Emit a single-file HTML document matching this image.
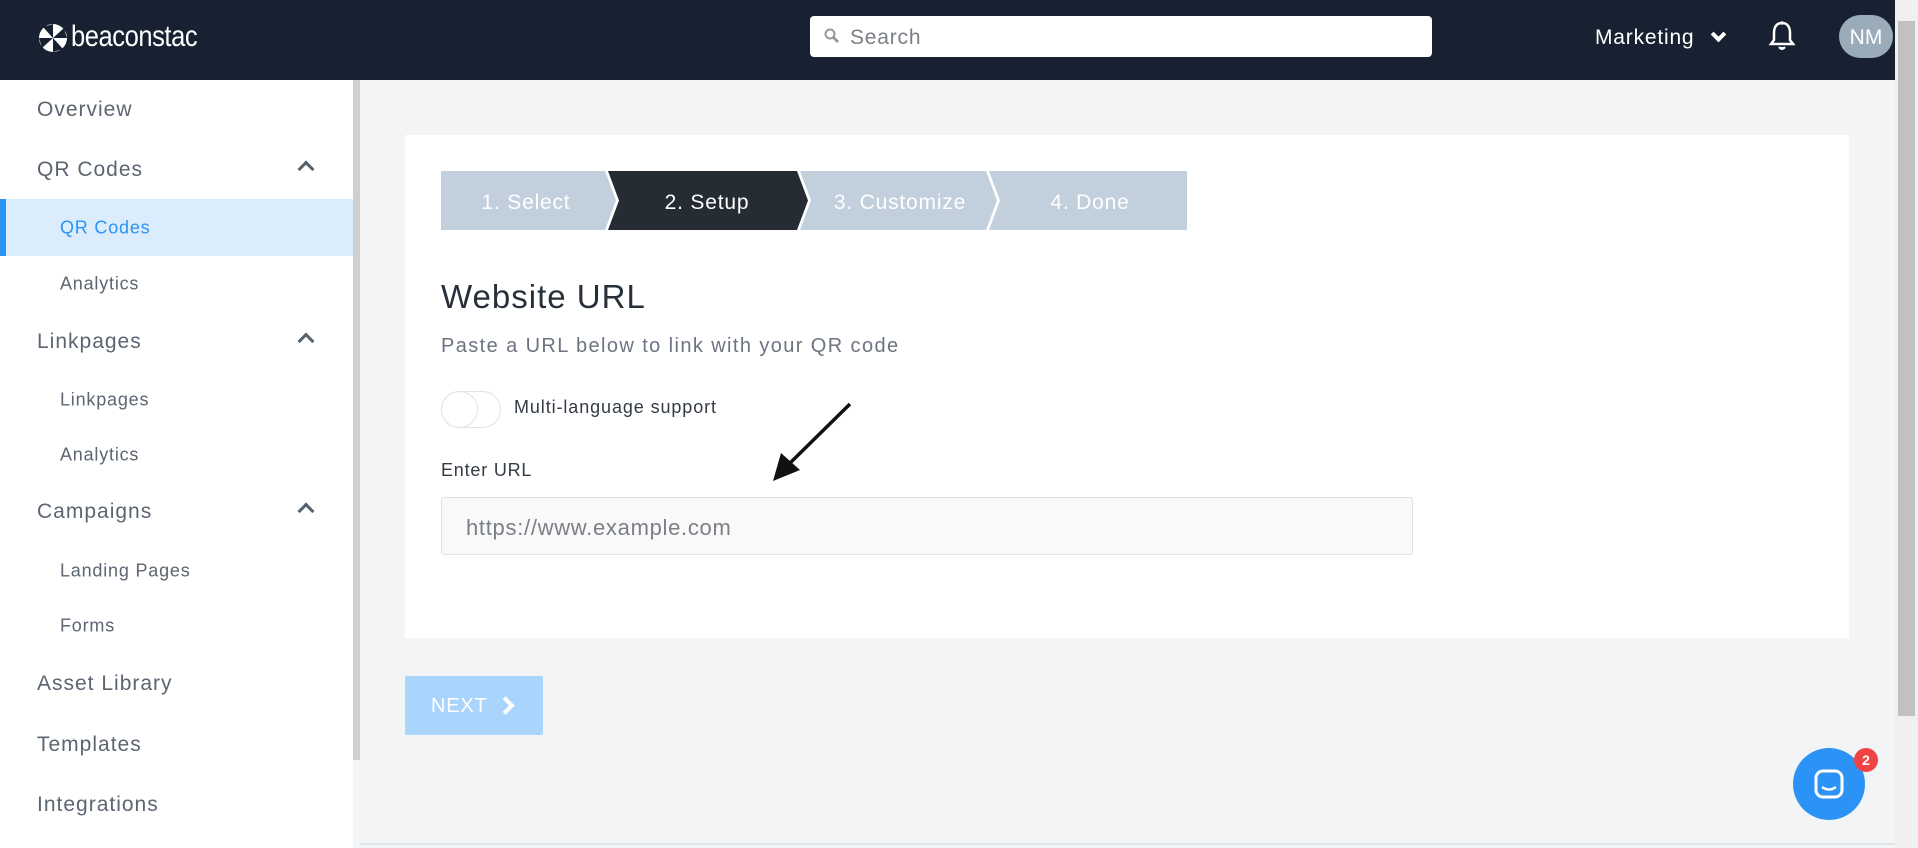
<!DOCTYPE html>
<html><head><style>
*{box-sizing:border-box;margin:0;padding:0}
body{width:1918px;height:848px;overflow:hidden;background:#f3f4f6;font-family:"Liberation Sans",sans-serif;position:relative}
.hdr{position:absolute;left:0;top:0;width:1895px;height:80px;background:#172131}
.abs{position:absolute}
.side{position:absolute;left:0;top:80px;width:353px;height:768px;background:#fff}
.sb{position:absolute;left:353px;top:80px;width:7px;height:680px;background:#cfcfcf}
.it{position:absolute;left:37px;font-size:21px;color:#5c6572;transform:translateY(-45%);letter-spacing:1px}
.sub{position:absolute;left:60px;font-size:18px;color:#5c6572;transform:translateY(-45%);letter-spacing:.8px}
.chev{position:absolute;left:300px;width:12px;height:12px;border-left:3px solid #56626e;border-top:3px solid #56626e;transform:rotate(45deg)}
.step{position:absolute;top:173px;height:59px;color:#fff;font-size:21px;line-height:59px;text-align:center;letter-spacing:.8px}
</style></head><body>
<div class="hdr">
 <svg class="abs" style="left:38px;top:23px" width="30" height="30" viewBox="0 0 30 30"><circle cx="15" cy="15" r="14" fill="#fff"/><path d="M15 1 L15 15 L5 4Z M29 15 L15 15 L26 5Z M15 29 L15 15 L25 26Z M1 15 L15 15 L4 25Z" fill="#172131"/></svg>
 <div class="abs" style="left:71px;top:20px;font-size:30px;color:#fff;letter-spacing:-0.5px;transform:scaleX(.85);transform-origin:left">beaconstac</div>
 <div class="abs" style="left:810px;top:16px;width:622px;height:41px;background:#fff;border-radius:4px">
  <svg class="abs" style="left:14px;top:12px" width="16" height="16" viewBox="0 0 16 16"><circle cx="6" cy="6" r="4.5" fill="none" stroke="#999" stroke-width="2"/><path d="M9.5 9.5 L14 14" stroke="#999" stroke-width="3"/></svg>
  <span class="abs" style="left:40px;top:10px;font-size:21px;color:#7a7f86;letter-spacing:.8px">Search</span>
 </div>
 <div class="abs" style="left:1595px;top:26px;font-size:21px;color:#fff;letter-spacing:.8px">Marketing</div>
 <div class="abs" style="left:1713px;top:29px;width:11px;height:11px;border-right:4px solid #fff;border-bottom:4px solid #fff;transform:rotate(45deg)"></div>
 <svg class="abs" style="left:1768px;top:20px" width="28" height="32" viewBox="0 0 28 32"><path d="M14 3 C8 3 6 8 6 13 L6 20 L3 24 L25 24 L22 20 L22 13 C22 8 20 3 14 3Z" fill="none" stroke="#fff" stroke-width="2.5"/><path d="M11 27 Q14 31 17 27" fill="#fff" stroke="#fff" stroke-width="2"/><circle cx="14" cy="3" r="1.8" fill="#fff"/></svg>
 <div class="abs" style="left:1839px;top:15px;width:54px;height:43px;border-radius:22px;background:#9aabba;color:#fff;font-size:21px;line-height:45px;text-align:center">NM</div>
</div>
<div class="abs" style="left:1895px;top:0;width:23px;height:848px;background:#f0f0f0"></div>
<div class="abs" style="left:1898px;top:21px;width:17px;height:695px;background:#c1c1c1"></div>
<div class="side">
 <div class="abs" style="left:0;top:119px;width:353px;height:57px;background:#dbecfc"></div>
 <div class="abs" style="left:0;top:119px;width:6px;height:57px;background:#2b93f5"></div>
</div>
<div class="sb"></div>
<div class="it" style="top:109px">Overview</div>
<div class="it" style="top:169px">QR Codes</div><div class="chev" style="top:163px"></div>
<div class="sub" style="top:227px;color:#2b93f5">QR Codes</div>
<div class="sub" style="top:283px">Analytics</div>
<div class="it" style="top:341px">Linkpages</div><div class="chev" style="top:335px"></div>
<div class="sub" style="top:399px">Linkpages</div>
<div class="sub" style="top:454px">Analytics</div>
<div class="it" style="top:511px">Campaigns</div><div class="chev" style="top:505px"></div>
<div class="sub" style="top:570px">Landing Pages</div>
<div class="sub" style="top:625px">Forms</div>
<div class="it" style="top:683px">Asset Library</div>
<div class="it" style="top:744px">Templates</div>
<div class="it" style="top:804px">Integrations</div>
<div class="abs" style="left:360px;top:843px;width:1535px;height:2px;background:#dde3ea"></div>
<div class="abs" style="left:405px;top:135px;width:1444px;height:503px;background:#fff"></div>
<svg class="abs" style="left:441px;top:171px" width="746" height="59" viewBox="0 0 746 59">
 <path d="M0 0 H164 L175 29.5 L164 59 H0Z" fill="#c2cfdc"/>
 <path d="M167 0 H356 L367 29.5 L356 59 H167 L178 29.5Z" fill="#252c34"/>
 <path d="M359 0 H545 L556 29.5 L545 59 H359 L370 29.5Z" fill="#c2cfdc"/>
 <path d="M548 0 H746 V59 H548 L559 29.5Z" fill="#c2cfdc"/>
</svg>
<div class="step" style="left:441px;width:170px">1. Select</div>
<div class="step" style="left:612px;width:190px">2. Setup</div>
<div class="step" style="left:805px;width:190px">3. Customize</div>
<div class="step" style="left:995px;width:190px">4. Done</div>
<div class="abs" style="left:441px;top:278px;font-size:33px;color:#27303a;letter-spacing:1px">Website URL</div>
<div class="abs" style="left:441px;top:335px;font-size:20px;color:#6b7480;letter-spacing:1.4px">Paste a URL below to link with your QR code</div>
<div class="abs" style="left:441px;top:391px;width:60px;height:37px;border:1px solid #dfe3e8;border-radius:19px"></div>
<div class="abs" style="left:441px;top:391px;width:37px;height:37px;border:1px solid #dfe3e8;border-radius:50%;background:#fff"></div>
<div class="abs" style="left:514px;top:397px;font-size:18px;color:#333b45;letter-spacing:.9px">Multi-language support</div>
<div class="abs" style="left:441px;top:460px;font-size:18px;color:#333b45;letter-spacing:.8px">Enter URL</div>
<div class="abs" style="left:441px;top:497px;width:972px;height:58px;border:1px solid #dfe3e8;border-radius:3px;background:#f9f9f9"></div>
<div class="abs" style="left:466px;top:515px;font-size:22px;color:#7a7f86;letter-spacing:.7px">https://www.example.com</div>
<svg class="abs" style="left:760px;top:395px" width="100" height="95" viewBox="0 0 100 95"><path d="M90 9 L28 70" stroke="#111" stroke-width="3.5"/><path d="M13 86 L21 58 L40 75Z" fill="#111"/></svg>
<div class="abs" style="left:405px;top:676px;width:138px;height:59px;background:#a9d5fc;border-radius:2px;color:#fff;font-size:20px;line-height:61px;padding-left:26px;letter-spacing:.8px">NEXT</div>
<div class="abs" style="left:499px;top:699px;width:13px;height:13px;border-right:4px solid #fff;border-top:4px solid #fff;transform:rotate(45deg)"></div>
<div class="abs" style="left:1793px;top:748px;width:72px;height:72px;border-radius:50%;background:#2b93f5"></div>
<svg class="abs" style="left:1813px;top:768px" width="32" height="32" viewBox="0 0 32 32"><rect x="3" y="3" width="26" height="26" rx="7" fill="none" stroke="#fff" stroke-width="3"/><path d="M9 19 Q16 24 23 19" fill="none" stroke="#fff" stroke-width="2.5"/></svg>
<div class="abs" style="left:1854px;top:748px;width:24px;height:24px;border-radius:50%;background:#f04444;color:#fff;font-size:14px;font-weight:bold;line-height:24px;text-align:center">2</div>
</body></html>
